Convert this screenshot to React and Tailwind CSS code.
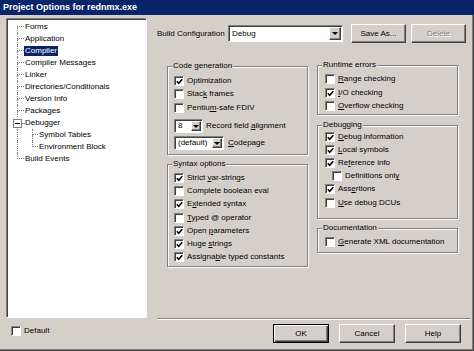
import React from "react";

// classic win2k bevels
const sunken =
  "border border-t-[#808080] border-l-[#808080] border-r-white border-b-white shadow-[inset_1px_1px_0_#404040]";
const raised =
  "border border-t-white border-l-white border-r-[#404040] border-b-[#404040] shadow-[inset_-1px_-1px_0_#808080]";

// text with one underlined accelerator letter
const U = ({ text, at }) => {
  if (at == null) return text;
  return (
    <>
      {text.slice(0, at)}
      <span className="underline">{text[at]}</span>
      {text.slice(at + 1)}
    </>
  );
};

const Check = ({ on, text, at, className = "" }) => (
  <div className={`flex items-center gap-[3px] ${className}`}>
    <span className={`flex h-[10px] w-[10px] shrink-0 items-center justify-center bg-white ${sunken}`}>
      {on && (
        <svg width="7" height="7" viewBox="0 0 7 7" className="ml-[1px] mt-[1px]">
          <path d="M0.8 3.2 L2.7 5.2 L6.3 1.2" stroke="#000" strokeWidth="1.6" fill="none" />
        </svg>
      )}
    </span>
    <span className="whitespace-nowrap leading-[10px]">
      <U text={text} at={at} />
    </span>
  </div>
);

const Combo = ({ value, className, btn }) => (
  <div className={`flex bg-white p-[1px] ${sunken} ${className}`}>
    <span className="flex-1 self-center pl-[2px] leading-[10px]">{value}</span>
    <span className={`flex items-center justify-center bg-[#d4d0c8] ${raised} ${btn}`}>
      <span className="h-0 w-0 border-x-[3px] border-t-[3px] border-x-transparent border-t-black" />
    </span>
  </div>
);

const Button = ({ children, className = "", disabled, isDefault }) => (
  <button
    type="button"
    className={`flex items-center justify-center bg-[#d4d0c8] leading-[10px] ${
      isDefault
        ? "border border-black shadow-[inset_1px_1px_0_white,inset_-1px_-1px_0_#404040,inset_-2px_-2px_0_#808080]"
        : raised
    } ${disabled ? "text-[#808080] [text-shadow:1px_1px_0_white]" : ""} ${className}`}
  >
    {children}
  </button>
);

const Group = ({ title, className, children }) => (
  <div className={`border border-[#808080] shadow-[1px_1px_0_white,inset_1px_1px_0_white] ${className}`}>
    <div className="-mt-[6px] ml-[4px] w-fit bg-[#d4d0c8] px-[1px] leading-[10px]">{title}</div>
    {children}
  </div>
);

// tree connector: vertical dotted line with a branch to the right
const Conn = ({ top = true, bottom = true, w = "w-[7px]" }) => (
  <div className={`flex h-[12px] shrink-0 flex-col ${w}`}>
    <div className={`h-[6px] border-b border-dotted border-[#808080] ${top ? "border-l" : ""}`} />
    <div className={`h-[6px] border-dotted border-[#808080] ${bottom ? "border-l" : ""}`} />
  </div>
);

const Label = ({ text, sel }) => (
  <span
    className={`self-center whitespace-nowrap px-[1px] leading-[10px] ${
      sel ? "bg-[#0a246a] text-white" : ""
    }`}
  >
    {text}
  </span>
);

const rootItems = [
  "Application",
  "Compiler",
  "Compiler Messages",
  "Linker",
  "Directories/Conditionals",
  "Version Info",
  "Packages",
];

export default function App() {
  return (
    <div className="flex h-[351px] w-[474px] flex-col overflow-hidden bg-[#d4d0c8] text-[8px] text-black shadow-[inset_-1px_-1px_0_#404040,inset_-2px_-2px_0_#808080] [font-family:'Liberation_Sans',Arial,sans-serif]">
      {/* title bar */}
      <div className="flex h-[15px] shrink-0 items-center bg-[#0a246a] pl-[3px] text-[9px] font-bold text-white">
        Project Options for rednmx.exe
      </div>

      <div className="flex h-[303px] shrink-0">
        {/* TREE */}
        <div className={`ml-[6px] mt-[3px] h-[300px] w-[141px] shrink-0 bg-white pt-[2px] ${sunken}`}>
          <div className="flex h-[12px] pl-[10px]">
            <Conn top={false} />
            <Label text="Forms" />
          </div>
          {rootItems.map((t) => (
            <div key={t} className="flex h-[12px] pl-[10px]">
              <Conn />
              <Label text={t} sel={t === "Compiler"} />
            </div>
          ))}
          <div className="flex h-[12px] pl-[6px]">
            <span className="flex h-[9px] w-[9px] items-center justify-center self-center border border-[#808080] bg-white">
              <span className="h-px w-[5px] bg-black" />
            </span>
            <span className="w-[2px] self-center border-t border-dotted border-[#808080]" />
            <Label text="Debugger" />
          </div>
          {["Symbol Tables", "Environment Block"].map((t, i) => (
            <div key={t} className="flex h-[12px] pl-[10px]">
              <div className="h-[12px] w-[15px] border-l border-dotted border-[#808080]" />
              <Conn bottom={i === 0} w="w-[6px]" />
              <Label text={t} />
            </div>
          ))}
          <div className="flex h-[12px] pl-[10px]">
            <Conn bottom={false} />
            <Label text="Build Events" />
          </div>
        </div>

        {/* OPTIONS */}
        <div className="flex flex-col pl-[10px]">
          <div className="mt-[9px] flex h-[19px] items-center">
            <span className="w-[71px] whitespace-nowrap">Build Configuration</span>
            <Combo value="Debug" className="h-[17px] w-[115px]" btn="w-[12px]" />
            <Button className="ml-[8px] h-[19px] w-[55px]">Save As...</Button>
            <Button className="ml-[5px] h-[19px] w-[55px]" disabled>
              Delete
            </Button>
          </div>

          <div className="ml-[10px] mt-[22px] flex items-start gap-[9px]">
            {/* left column */}
            <div className="flex w-[141px] flex-col">
              <Group title="Code generation" className="mt-[1px] h-[89px]">
                <div className="mt-[3px] pl-[6px]">
                  <Check on text="Optimization" className="h-[13.5px]" />
                  <Check text="Stack frames" at={4} className="h-[13.5px]" />
                  <Check text="Pentium-safe FDIV" at={6} className="h-[13.5px]" />
                  <div className="mt-[4.5px] flex items-center">
                    <Combo value="8" className="h-[14px] w-[29px]" btn="w-[10px]" />
                    <span className="ml-[3px] whitespace-nowrap">
                      <U text="Record field alignment" at={13} />
                    </span>
                  </div>
                  <div className="mt-[3px] flex items-center">
                    <Combo value="(default)" className="h-[14px] w-[50px]" btn="w-[10px]" />
                    <span className="ml-[4px] whitespace-nowrap">
                      <U text="Codepage" at={0} />
                    </span>
                  </div>
                </div>
              </Group>

              <Group title="Syntax options" className="mt-[9px] h-[103px]">
                <div className="mt-[2.4px] pl-[6px]">
                  <Check on text="Strict var-strings" at={7} className="h-[13.2px]" />
                  <Check text="Complete boolean eval" className="h-[13.2px]" />
                  <Check on text="Extended syntax" at={1} className="h-[13.2px]" />
                  <Check text="Typed @ operator" at={0} className="h-[13.2px]" />
                  <Check on text="Open parameters" at={5} className="h-[13.2px]" />
                  <Check on text="Huge strings" at={5} className="h-[13.2px]" />
                  <Check on text="Assignable typed constants" at={7} className="h-[13.2px]" />
                </div>
              </Group>
            </div>

            {/* right column */}
            <div className="flex w-[141px] flex-col">
              <Group title="Runtime errors" className="h-[50px]">
                <div className="mt-[2.25px] pl-[7px]">
                  <Check text="Range checking" at={0} className="h-[13.5px]" />
                  <Check on text="I/O checking" at={0} className="h-[13.5px]" />
                  <Check text="Overflow checking" at={0} className="h-[13.5px]" />
                </div>
              </Group>

              <Group title="Debugging" className="mt-[10px] h-[94px]">
                <div className="pl-[7px]">
                  <Check on text="Debug information" at={0} className="h-[13.2px]" />
                  <Check on text="Local symbols" at={0} className="h-[13.2px]" />
                  <Check on text="Reference info" at={2} className="h-[13.2px]" />
                  <Check text="Definitions only" at={15} className="ml-[7px] h-[13.2px]" />
                  <Check on text="Assertions" at={3} className="h-[13.2px]" />
                  <Check text="Use debug DCUs" at={0} className="h-[13.2px]" />
                </div>
              </Group>

              <Group title="Documentation" className="mt-[9px] h-[25px]">
                <div className="mt-[2.4px] pl-[7px]">
                  <Check text="Generate XML documentation" at={0} className="h-[13.2px]" />
                </div>
              </Group>
            </div>
          </div>
        </div>
      </div>

      {/* separator */}
      <div className="ml-[157px] mr-[4px] h-[2px] shrink-0 border-t border-b border-t-[#808080] border-b-white" />

      {/* bottom row */}
      <div className="flex h-[28px] shrink-0 items-start">
        <Check text="Default" className="ml-[11px] mt-[6px] h-[10px] gap-[2px]" />
        <div className="ml-auto mr-[13px] mt-[4px] flex gap-[10px]">
          <Button isDefault className="h-[19px] w-[56px]">
            OK
          </Button>
          <Button className="h-[19px] w-[56px]">Cancel</Button>
          <Button className="h-[19px] w-[56px]">Help</Button>
        </div>
      </div>
    </div>
  );
}
